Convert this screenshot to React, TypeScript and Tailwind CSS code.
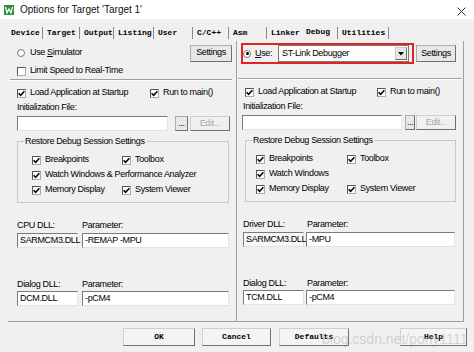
import React from "react";

const tabs = [
  { name: "Device", w: "w-[35px]", first: true },
  { name: "Target", w: "w-[37px]" },
  { name: "Output", w: "w-[34px]" },
  { name: "Listing", w: "w-[40px]" },
  { name: "User", w: "w-[39px]" },
  { name: "C/C++", w: "w-[36px]" },
  { name: "Asm", w: "w-[38px]" },
  { name: "Linker", w: "w-[36px]" },
  { name: "Debug", w: "w-[35px]", active: true },
  { name: "Utilities", w: "w-[52px]", last: true },
];

function CheckMark() {
  return (
    <svg width="7" height="7" viewBox="0 0 7 7">
      <path d="M0.6 3.3 L2.6 5.3 L6.4 1.2" stroke="#000" strokeWidth="1.5" fill="none" />
    </svg>
  );
}

function Check({ label, checked = true }: { label: string; checked?: boolean }) {
  return (
    <div className="flex items-center h-[14px]">
      <span className="w-[9px] h-[9px] bg-white border border-t-[#555] border-l-[#555] border-r-[#aaa] border-b-[#aaa] flex items-center justify-center shrink-0">
        {checked && <CheckMark />}
      </span>
      <span className="ml-[4px] whitespace-nowrap">{label}</span>
    </div>
  );
}

function Radio({ checked }: { checked?: boolean }) {
  return (
    <span className="w-[8px] h-[8px] rounded-full bg-white border border-[#777] flex items-center justify-center shrink-0">
      {checked && <span className="w-[3px] h-[3px] rounded-full bg-black" />}
    </span>
  );
}

function Field({ text, className }: { text?: string; className: string }) {
  return (
    <div className={`h-[15px] bg-white border border-t-[#7a7a7a] border-l-[#7a7a7a] border-r-[#e3e3e3] border-b-[#e3e3e3] pl-[2px] leading-[13px] whitespace-nowrap ${className}`}>
      {text}
    </div>
  );
}

function SmallBtn({ label, className, disabled }: { label: string; className: string; disabled?: boolean }) {
  return (
    <div className={`h-[17px] flex items-center justify-center border border-[#adadad] border-r-[#6f6f6f] border-b-[#6f6f6f] bg-[#e8e8e8] ${disabled ? "text-[#a8a8a8] bg-[#f0f0f0] border-[#cfcfcf]" : ""} ${className}`}>
      {label}
    </div>
  );
}

function GroupBox({ className, pl, off, middle }: { className: string; pl: string; off: string; middle: string }) {
  return (
    <div className={`mt-[10px] h-[62px] border border-[#c9c9c9] flex flex-col ${className}`}>
      <span className="-mt-[6px] ml-[6px] px-[1px] h-[11px] leading-[11px] bg-[#f0f0f0] self-start whitespace-nowrap">Restore Debug Session Settings</span>
      <div className={`mt-[6px] flex flex-col gap-[1px] ${pl}`}>
        <div className="flex">
          <div className={off}><Check label="Breakpoints" /></div>
          <Check label="Toolbox" />
        </div>
        <Check label={middle} />
        <div className="flex">
          <div className={off}><Check label="Memory Display" /></div>
          <Check label="System Viewer" />
        </div>
      </div>
    </div>
  );
}

function Separator({ className }: { className: string }) {
  return (
    <div className={`flex flex-col ${className}`}>
      <div className="h-px bg-[#a0a0a0]" />
      <div className="h-px bg-white" />
    </div>
  );
}

function BottomBtn({ label, className }: { label: string; className: string }) {
  return (
    <div className={`h-[18px] flex items-center justify-center bg-[#f4f4f4] border border-[#d0d0d0] border-r-[#707070] border-b-[#707070] font-['Liberation_Mono',monospace] font-bold text-[8px] ${className}`}>
      {label}
    </div>
  );
}

export default function App() {
  return (
    <div className="relative w-[474px] h-[352px] overflow-hidden bg-[#f0f0f0] text-black text-[9px] tracking-[-0.35px] font-['Liberation_Sans',Arial,sans-serif]">
      {/* Title bar */}
      <div className="h-[19px] bg-white flex items-center pl-[4px] pr-[8px] tracking-normal">
        <svg width="10" height="10" viewBox="0 0 10 10" className="shrink-0">
          <rect width="10" height="10" fill="#2e8b3a" />
          <path d="M1.5 2 L3 8 L5 4 L7 8 L8.5 2" stroke="#fff" strokeWidth="1.3" fill="none" />
        </svg>
        <span className="ml-[6px] text-[10px] text-[#111]">Options for Target 'Target 1'</span>
        <svg width="9" height="9" viewBox="0 0 9 9" className="ml-auto mt-[4px]">
          <path d="M0.5 0.5 L8.5 8.5 M8.5 0.5 L0.5 8.5" stroke="#333" strokeWidth="1" />
        </svg>
      </div>

      {/* Tabs */}
      <div className="h-[22px] pt-[8px] pl-[7px] flex font-['Liberation_Mono',monospace] font-bold text-[8px] tracking-normal">
        {tabs.map((t) => (
          <div
            key={t.name}
            className={`${t.w} h-[12px] leading-[12px] pl-[4px] whitespace-nowrap ${t.first || t.active ? "" : "border-l border-[#8a8a8a]"} ${t.last ? "border-r" : ""} ${t.active ? "-mt-[1px]" : ""}`}
          >
            {t.name}
          </div>
        ))}
      </div>

      {/* Body */}
      <div className="flex ml-[8px] w-[456px] h-[281px] border-b border-[#a0a0a0]">
        {/* Left column */}
        <div className="w-[229px] border-r border-[#a0a0a0] flex flex-col pl-[9px] pr-[4px]">
          <div className="mt-[3px] h-[18px] flex items-center">
            <Radio />
            <span className="ml-[5px]">Use <u>S</u>imulator</span>
            <SmallBtn label="Settings" className="ml-auto w-[42px]" />
          </div>
          <div className="mt-[2px]">
            <Check label="Limit Speed to Real-Time" checked={false} />
          </div>
          <Separator className="mt-[1px] -ml-[7px]" />
          <div className="mt-[5px] flex">
            <div className="w-[133px]"><Check label="Load Application at Startup" /></div>
            <Check label="Run to main()" />
          </div>
          <div className="mt-[1px] h-[12px] leading-[12px]">Initialization File:</div>
          <div className="mt-[3px] flex">
            <Field className="w-[151px]" />
            <SmallBtn label="..." className="ml-[7px] w-[13px] !h-[15px]" />
            <SmallBtn label="Edit..." className="ml-[2px] w-[40px] !h-[15px]" disabled />
          </div>
          <GroupBox className="w-[212px]" pl="pl-[14px]" off="w-[90px]" middle="Watch Windows & Performance Analyzer" />
          <div className="mt-[16px] h-[12px] leading-[12px] flex">
            <span className="w-[65px]">CPU DLL:</span>
            <span>Parameter:</span>
          </div>
          <div className="mt-[2px] flex gap-[4px]">
            <Field text="SARMCM3.DLL" className="w-[61px] !bg-[#f7f7f7]" />
            <Field text="-REMAP -MPU" className="w-[147px]" />
          </div>
          <div className="mt-[30px] h-[12px] leading-[12px] flex">
            <span className="w-[65px]">Dialog DLL:</span>
            <span>Parameter:</span>
          </div>
          <div className="mt-[1px] flex gap-[4px]">
            <Field text="DCM.DLL" className="w-[61px]" />
            <Field text="-pCM4" className="w-[147px]" />
          </div>
        </div>

        {/* Right column */}
        <div className="w-[227px] border-r border-[#a0a0a0] flex flex-col pl-[6px] pr-[7px]">
          <div className="mt-[2px] flex items-center">
            <div className="-ml-[2px] w-[173px] h-[21px] border-2 border-[#e02424] flex items-center pr-[3px]">
              <Radio checked />
              <span className="ml-[4px]"><u>U</u>se:</span>
              <div className="ml-auto w-[131px] h-[17px] bg-white border border-[#7a7a7a] flex items-center pl-[3px]">
                <span className="whitespace-nowrap">ST-Link Debugger</span>
                <div className="ml-auto mr-[1px] w-[12px] h-[13px] bg-[#e6e6e6] border border-[#c8c8c8] border-r-[#6f6f6f] border-b-[#6f6f6f] flex items-center justify-center">
                  <svg width="6" height="4" viewBox="0 0 6 4"><path d="M0 0 H6 L3 3.5 Z" fill="#000" /></svg>
                </div>
              </div>
            </div>
            <SmallBtn label="Settings" className="ml-auto w-[40px] border-[#707070]" />
          </div>
          <Separator className="mt-[14px] -ml-[5px] mr-[-6px]" />
          <div className="mt-[5px] flex ml-[2px]">
            <div className="w-[132px]"><Check label="Load Application at Startup" /></div>
            <Check label="Run to main()" />
          </div>
          <div className="mt-[1px] h-[12px] leading-[12px]">Initialization File:</div>
          <div className="mt-[3px] flex">
            <Field className="w-[161px] -ml-px" />
            <SmallBtn label="..." className="ml-[3px] w-[10px] !h-[15px]" />
            <SmallBtn label="Edit..." className="ml-[1px] w-[40px] !h-[15px]" disabled />
          </div>
          <GroupBox className="w-[211px] ml-[2px]" pl="pl-[10px]" off="w-[91px]" middle="Watch Windows" />
          <div className="mt-[16px] h-[12px] leading-[12px] flex">
            <span className="w-[64px]">Driver DLL:</span>
            <span>Parameter:</span>
          </div>
          <div className="mt-[2px] flex gap-[2px]">
            <Field text="SARMCM3.DLL" className="w-[61px] !bg-[#f7f7f7]" />
            <Field text="-MPU" className="w-[149px]" />
          </div>
          <div className="mt-[30px] h-[12px] leading-[12px] flex">
            <span className="w-[64px]">Dialog DLL:</span>
            <span>Parameter:</span>
          </div>
          <div className="mt-[1px] flex gap-[2px]">
            <Field text="TCM.DLL" className="w-[61px]" />
            <Field text="-pCM4" className="w-[149px]" />
          </div>
        </div>
      </div>

      {/* Bottom buttons */}
      <div className="mt-[6px] flex tracking-normal">
        <BottomBtn label="OK" className="ml-[123px] w-[72px]" />
        <BottomBtn label="Cancel" className="ml-[7px] w-[69px]" />
        <BottomBtn label="Defaults" className="ml-[8px] w-[70px]" />
        <BottomBtn label="Help" className="ml-[51px] w-[67px]" />
      </div>

      {/* Watermark */}
      <div className="absolute left-[322px] top-[329px] text-[14px] tracking-normal text-[#9a9a9a]/40 whitespace-nowrap pointer-events-none">
        blog.csdn.net/pony1111
      </div>
    </div>
  );
}
